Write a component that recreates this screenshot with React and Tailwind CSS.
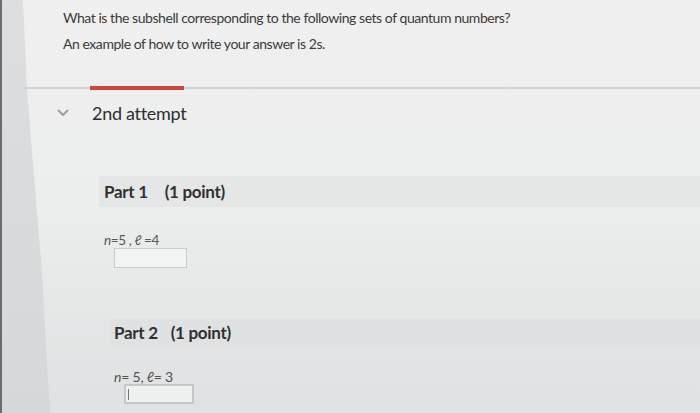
import React from "react";

function Chevron() {
  return (
    <svg width="12" height="8" viewBox="0 0 12 8" className="block">
      <path d="M1.5 1.5 L6 6 L10.5 1.5" fill="none" stroke="#9aa0a3" strokeWidth="2" strokeLinecap="round" strokeLinejoin="round" />
    </svg>
  );
}

export default function App() {
  return (
    <div className="relative w-[700px] h-[413px] overflow-hidden bg-linear-to-b from-[#f0f0f0] via-[#eceded] to-[#dfe1e2] font-['Lato','Liberation_Sans',sans-serif] text-[#3a3b3c]">
      <div className="absolute inset-y-0 left-0 w-[52px] bg-linear-to-b from-[#dcdedf] to-[#d5d8d9] [clip-path:polygon(0_0,23px_0,27px_90px,42px_273px,50px_413px,0_413px)]" />
      <div className="absolute inset-y-0 left-0 w-[2px] bg-[#6a6c6d]" />

      <div className="relative flex flex-col">
        <div className="pl-[63px] pt-[5px] text-[14px] leading-[26px] tracking-[-0.45px]">
          <p>What is the subshell corresponding to the following sets of quantum numbers?</p>
          <p>An example of how to write your answer is 2s.</p>
        </div>

        <div className="mt-[30px] ml-[24px] h-[2px] bg-[#d2d4d5] relative">
          <div className="absolute left-[66px] top-[-1px] w-[94px] h-[4px] bg-[#cb4a40]" />
        </div>

        <div className="flex items-center pl-[57px] mt-[12px] h-[24px]">
          <Chevron />
          <span className="ml-[23px] text-[18px] text-[#2e2f30] tracking-[-0.3px]">2nd attempt</span>
        </div>

        <div className="mt-[51px] ml-[99px] h-[31px] bg-[#e5e7e7] flex items-center pl-[5px]">
          <span className="text-[17px] font-bold text-[#2f3031] tracking-[-0.3px]">Part 1</span>
          <span className="ml-[17px] text-[17px] font-bold text-[#2f3031] tracking-[-0.3px]">(1 point)</span>
        </div>

        <div className="pl-[104px] mt-[26px] text-[13.5px] leading-[14px] text-[#555758] tracking-[-0.4px]">
          <span className="italic">n</span>=5 , <span className="italic">ℓ</span> =4
        </div>
        <div className="ml-[114px] mt-[1px] w-[73px] h-[20px] border border-[#c9cbcc] bg-[#f2f3f3]" />

        <div className="mt-[51px] ml-[111px] h-[28px] bg-[#dfe1e2] flex items-center pl-[3px]">
          <span className="text-[17px] font-bold text-[#2f3031] tracking-[-0.3px]">Part 2</span>
          <span className="ml-[13px] text-[17px] font-bold text-[#2f3031] tracking-[-0.3px]">(1 point)</span>
        </div>

        <div className="pl-[114px] mt-[23px] text-[14px] leading-[14px] text-[#505253] tracking-[-0.2px]">
          <span className="italic">n</span>= 5, <span className="italic">ℓ</span>= 3
        </div>
        <div className="ml-[124px] mt-0 w-[70px] h-[20px] border-2 border-[#c3c8c8] bg-[#eff1f1] flex items-center pl-[2px]">
          <div className="w-px h-[11px] bg-[#777]" />
        </div>
      </div>
    </div>
  );
}
